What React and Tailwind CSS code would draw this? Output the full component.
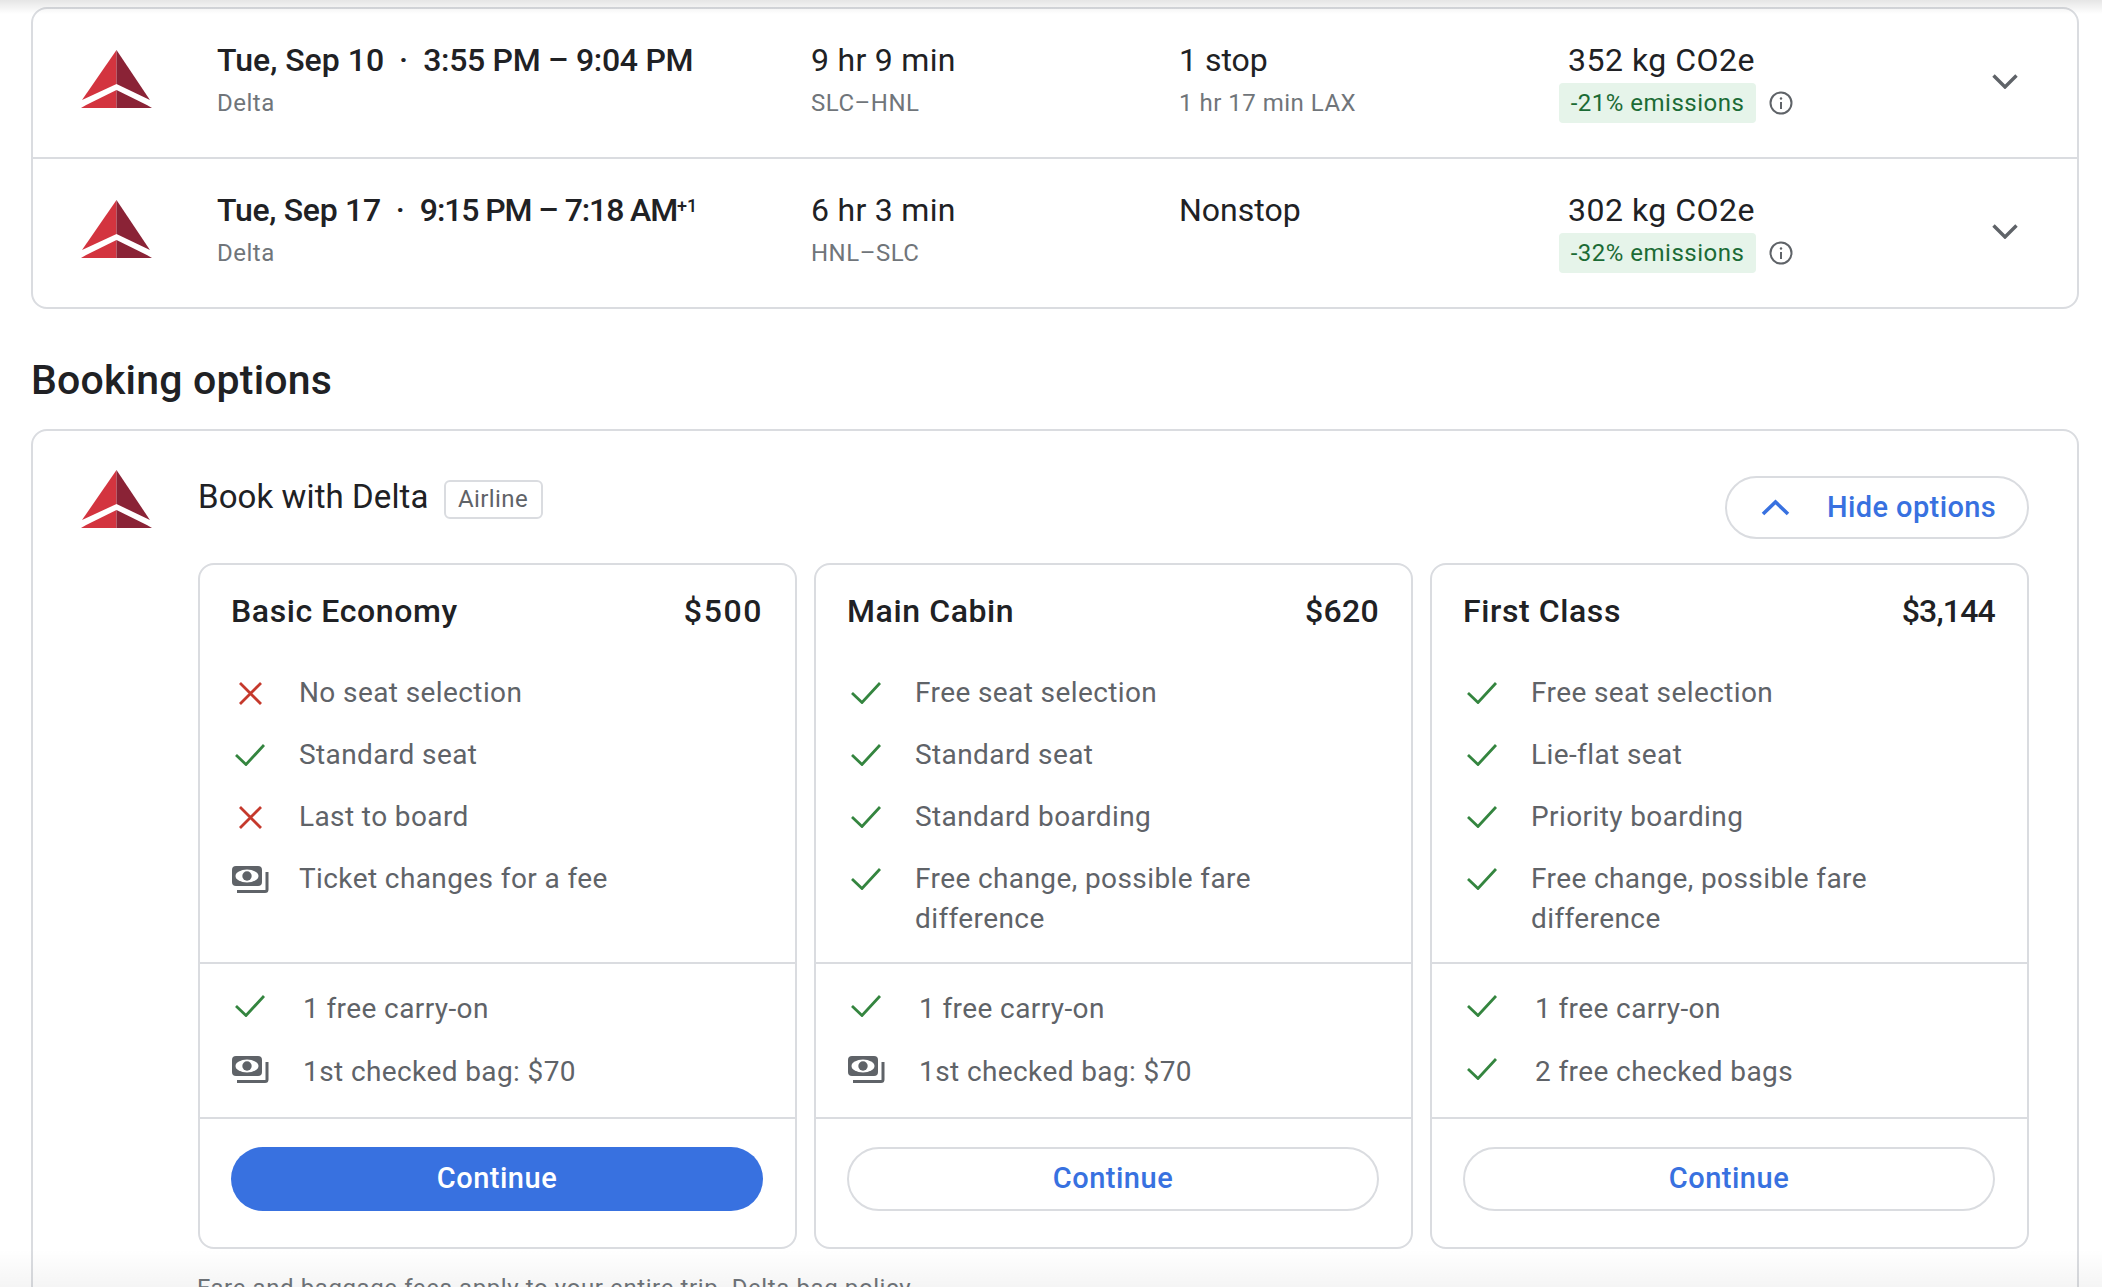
const FLIGHTS = [
  { date: 'Tue, Sep 10', dateClass: '', times: '3:55 PM – 9:04 PM', timesClass: 'tracking-[-0.3px]', plus: false, duration: '9 hr 9 min', route: 'SLC–HNL', stops: '1 stop', layover: '1 hr 17 min LAX', co2: '352 kg CO2e', emissions: '-21% emissions' },
  { date: 'Tue, Sep 17', dateClass: 'tracking-[-0.3px]', times: '9:15 PM – 7:18 AM', timesClass: 'tracking-[-1.1px]', plus: true, duration: '6 hr 3 min', route: 'HNL–SLC', stops: 'Nonstop', layover: '', co2: '302 kg CO2e', emissions: '-32% emissions' },
];

const FARES = [
  {
    name: 'Basic Economy',
    price: '$500',
    priceClass: 'tracking-[1.6px]',
    primary: true,
    features: [
      ['x', 'No seat selection'],
      ['check', 'Standard seat'],
      ['x', 'Last to board'],
      ['fee', 'Ticket changes for a fee'],
    ],
    bags: [
      ['check', '1 free carry-on'],
      ['fee', '1st checked bag: $70'],
    ],
  },
  {
    name: 'Main Cabin',
    price: '$620',
    priceClass: 'tracking-[0.3px]',
    features: [
      ['check', 'Free seat selection'],
      ['check', 'Standard seat'],
      ['check', 'Standard boarding'],
      ['check', 'Free change, possible fare difference'],
    ],
    bags: [
      ['check', '1 free carry-on'],
      ['fee', '1st checked bag: $70'],
    ],
  },
  {
    name: 'First Class',
    price: '$3,144',
    priceClass: 'tracking-[-0.8px]',
    features: [
      ['check', 'Free seat selection'],
      ['check', 'Lie-flat seat'],
      ['check', 'Priority boarding'],
      ['check', 'Free change, possible fare difference'],
    ],
    bags: [
      ['check', '1 free carry-on'],
      ['check', '2 free checked bags'],
    ],
  },
];

function DeltaLogo() {
  return (
    <svg viewBox="0 0 69 58" preserveAspectRatio="none" className="w-[71px] h-[58px] shrink-0">
      <path d="M34.5 0 1 50 34.5 34z" fill="#d3343f" />
      <path d="M34.5 0 67 50 34.5 34z" fill="#8a2336" />
      <path d="M34.5 40 5 55 0 58h34.5z" fill="#d3343f" />
      <path d="M34.5 40 64 55 69 58H34.5z" fill="#8a2336" />
    </svg>
  );
}

function StatusIcon({ kind, className = '' }) {
  if (kind === 'check') {
    return (
      <svg viewBox="0 0 30 22" className={`w-[30px] h-[22px] ${className}`} fill="none" stroke="#34853f" strokeWidth="2.8">
        <path d="M1 11 11 20.5 29 1" />
      </svg>
    );
  }
  if (kind === 'x') {
    return (
      <svg viewBox="0 0 25 23" className={`w-[25px] h-[23px] ${className}`} fill="none" stroke="#c5392c" strokeWidth="2.8">
        <path d="M2 1 23 22M23 1 2 22" />
      </svg>
    );
  }
  return (
    <svg viewBox="0 0 37 27" className={`w-[37px] h-[27px] ${className}`}>
      <rect x="0" y="0" width="30" height="20" rx="4" fill="#5f6368" />
      <ellipse cx="15" cy="10" rx="11.5" ry="6.5" fill="#fff" />
      <circle cx="15" cy="10" r="4.7" fill="#5f6368" />
      <path d="M35 6v17.5a2 2 0 0 1-2 2H5" fill="none" stroke="#5f6368" strokeWidth="3" />
    </svg>
  );
}

function InfoIcon() {
  return (
    <svg viewBox="0 0 24 24" className="w-6 h-6" fill="none" stroke="#5f6368" strokeWidth="2">
      <circle cx="12" cy="12" r="10.5" />
      <path d="M12 11v7" />
      <circle cx="12" cy="7.5" r="1.2" fill="#5f6368" stroke="none" />
    </svg>
  );
}

function FlightRow({ flight, last }) {
  const subText = 'h-10 mt-[3px] leading-10 text-[24px] tracking-[0.5px] text-[#70757a] whitespace-nowrap';
  return (
    <div className={`flex items-start h-[148px] box-content ${last ? '' : 'border-b-2 border-[#dadce0]'}`}>
      <div className="flex items-start w-full pt-[31px] pl-[48px] pr-[58px]">
        <div className="mt-[10px] mr-[65px]">
          <DeltaLogo />
        </div>
        <div className="w-[594px]">
          <div className="h-10 leading-10 text-[32px] font-medium text-[#202124] whitespace-nowrap">
            <span className={flight.dateClass}>{flight.date}</span>
            <span className="mx-[15px]">·</span>
            <span className={flight.timesClass}>{flight.times}</span>
            {flight.plus && <sup className="text-[18px]">+1</sup>}
          </div>
          <div className={subText}>Delta</div>
        </div>
        <div className="w-[368px]">
          <div className="h-10 leading-10 text-[32px] tracking-[0.3px] text-[#202124]">{flight.duration}</div>
          <div className={subText}>{flight.route}</div>
        </div>
        <div className="w-[380px]">
          <div className="h-10 leading-10 text-[32px] text-[#202124]">{flight.stops}</div>
          <div className={subText}>{flight.layover}</div>
        </div>
        <div className="w-[433px]">
          <div className="h-10 pl-[9px] leading-10 text-[32px] tracking-[0.5px] text-[#202124]">{flight.co2}</div>
          <div className="flex items-center gap-[13px] mt-[3px]">
            <div className="w-[197px] h-10 rounded-[4px] bg-[#e6f4ea] text-[#1b6b35] text-[24px] tracking-[0.5px] leading-10 text-center whitespace-nowrap">
              {flight.emissions}
            </div>
            <InfoIcon />
          </div>
        </div>
        <svg viewBox="0 0 26 15" className="w-[26px] h-[15px] mt-[34px] shrink-0" fill="none" stroke="#5f6368" strokeWidth="3.4">
          <path d="M1.5 1.5 13 13 24.5 1.5" />
        </svg>
      </div>
    </div>
  );
}

function FareCard({ fare }) {
  return (
    <div className="border-2 border-[#dadce0] rounded-[16px]">
      <div className="h-[399px] pl-[31px] pr-[32px] pt-[26px] border-b-2 border-[#dadce0]">
        <div className="flex justify-between h-10 leading-10 text-[32px] font-medium text-[#202124]">
          <span className="tracking-[0.6px]">{fare.name}</span>
          <span className={fare.priceClass}>{fare.price}</span>
        </div>
        <div className="mt-[42px] flex flex-col gap-[22px]">
          {fare.features.map(([kind, label]) => (
            <div key={label} className="flex items-start">
              <div className="w-[38px] h-10 mr-[30px] flex items-center justify-center shrink-0">
                <StatusIcon kind={kind} />
              </div>
              <div className="w-[400px] text-[28px] tracking-[0.4px] leading-10 text-[#5f6368]">{label}</div>
            </div>
          ))}
        </div>
      </div>
      <div className="pl-[31px] pr-[32px] py-[25px] flex flex-col gap-[23px] border-b-2 border-[#dadce0]">
        {fare.bags.map(([kind, label]) => (
          <div key={label} className="flex items-center h-10">
            <div className="w-[38px] mr-[34px] flex items-center justify-center shrink-0">
              <StatusIcon kind={kind} className="-mt-[6px]" />
            </div>
            <div className="text-[28px] tracking-[0.4px] leading-10 text-[#5f6368]">{label}</div>
          </div>
        ))}
      </div>
      <div className="pl-[31px] pr-[32px] pt-[28px] pb-[36px]">
        {fare.primary ? (
          <button className="w-full h-[64px] rounded-full bg-[#3871e0] text-white text-[29px] tracking-[0.5px] font-medium">Continue</button>
        ) : (
          <button className="w-full h-[64px] rounded-full border-2 border-[#dadce0] text-[#3871e0] text-[29px] tracking-[0.5px] font-medium">Continue</button>
        )}
      </div>
    </div>
  );
}

export default function App() {
  return (
    <div className="relative w-[2102px] h-[1287px] overflow-hidden bg-white" style={{ fontFamily: 'Roboto, "Noto Sans", sans-serif' }}>
      <div className="pl-[31px] pr-[23px] pt-[7px]">
        <div className="border-2 border-[#dadce0] rounded-[16px]">
          {FLIGHTS.map((f, i) => (
            <FlightRow key={f.date} flight={f} last={i === FLIGHTS.length - 1} />
          ))}
        </div>

        <h2 className="mt-[47px] mb-[25px] h-12 leading-[48px] text-[41px] tracking-[0.2px] font-medium text-[#202124]">Booking options</h2>

        <div className="border-2 border-[#dadce0] rounded-[16px] pl-[48px] pr-[48px] pt-[39px] pb-[40px]">
          <div className="flex items-start h-[93px]">
            <DeltaLogo />
            <div className="flex items-center h-[39px] mt-[10px] ml-[46px]">
              <span className="text-[33px] tracking-[0.1px] leading-10 text-[#202124] -mt-[5px]">Book with Delta</span>
              <span className="ml-[15px] w-[99px] h-[39px] border-2 border-[#dadce0] rounded-[6px] text-[24px] tracking-[0.4px] leading-[35px] text-center text-[#5f6368]">Airline</span>
            </div>
            <button className="ml-auto mt-[6px] w-[304px] h-[63px] rounded-full border-2 border-[#dadce0] flex items-center pl-[34px] text-[#3871e0] text-[29px] tracking-[0.4px] font-medium">
              <svg viewBox="0 0 29 17" className="w-[29px] h-[17px] mr-[37px]" fill="none" stroke="#3871e0" strokeWidth="3.6">
                <path d="M2 15 14.5 3 27 15" />
              </svg>
              Hide options
            </button>
          </div>
          <div className="ml-[117px] grid grid-cols-3 gap-[17px]">
            {FARES.map((fare) => (
              <FareCard key={fare.name} fare={fare} />
            ))}
          </div>
          <div className="ml-[116px] mt-[23px] text-[24px] tracking-[0.6px] leading-8 text-[#70757a]">
            Fare and baggage fees apply to your entire trip. Delta bag policy
          </div>
        </div>
      </div>
      <div className="absolute top-0 left-0 right-0 h-[14px] bg-gradient-to-b from-black/10 to-transparent"></div>
      <div className="absolute bottom-0 left-0 right-0 h-[38px] bg-gradient-to-b from-transparent to-black/[0.04]"></div>
    </div>
  );
}
